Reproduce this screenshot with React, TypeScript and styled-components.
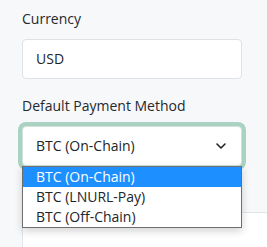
import React, { useState } from "react";
import styled, { createGlobalStyle } from "styled-components";

const options = ["BTC (On-Chain)", "BTC (LNURL-Pay)", "BTC (Off-Chain)"];

export default function App() {
	const [selected] = useState(options[0]);

	return (
		<>
			<GlobalStyle />
			<Page>
				<Label>Currency</Label>
				<Input>USD</Input>

				<Label $gap={17}>Default Payment Method</Label>
				<SelectWrap>
					<Select>
						<span>{selected}</span>
						<svg width="10" height="6" viewBox="0 0 10 6" fill="none">
							<path
								d="M1 1l4 4 4-4"
								stroke="#1f2429"
								strokeWidth="1.6"
								strokeLinecap="round"
								strokeLinejoin="round"
							/>
						</svg>
					</Select>
					<Dropdown>
						{options.map((opt) => (
							<Option key={opt} $active={opt === selected}>
								{opt}
							</Option>
						))}
					</Dropdown>
				</SelectWrap>

				{/* next card, cut off by the frame */}
				<Card />
			</Page>
		</>
	);
}

const GlobalStyle = createGlobalStyle`
	html, body {
		margin: 0;
		padding: 0;
		background: #f7f8fa;
		overflow: hidden;
	}
	* {
		box-sizing: border-box;
	}
`;

const Page = styled.div`
	display: flex;
	flex-direction: column;
	padding: 9px 25px 0 22px;
	font-family: "Open Sans", sans-serif;
	font-size: 14px;
	line-height: 20px;
	color: #212529;
`;

const Label = styled.div<{ $gap?: number }>`
	margin-top: ${(p) => p.$gap ?? 0}px;
	margin-bottom: 10px;
	color: #24292e;
`;

const Input = styled.div`
	height: 40px;
	display: flex;
	align-items: center;
	padding: 0 13px;
	background: #fff;
	border: 1px solid #dee2e6;
	border-radius: 4px;
`;

const SelectWrap = styled.div`
	position: relative;
`;

const Select = styled.div`
	height: 40px;
	display: flex;
	align-items: center;
	justify-content: space-between;
	padding: 0 15px 0 13px;
	background: #fff;
	border: 1px solid #cfe3da;
	border-radius: 4px;
	box-shadow: 0 0 0 4px #a9d2c2;
`;

const Dropdown = styled.div`
	position: absolute;
	top: 40px;
	left: 0;
	right: 0;
	z-index: 10;
	background: #fff;
	border: 1px solid #6f6f6f;
	box-shadow: 0 3px 8px rgba(0, 0, 0, 0.18);
`;

const Option = styled.div<{ $active: boolean }>`
	height: 20px;
	padding: 0 13px;
	line-height: 20px;
	background: ${(p) => (p.$active ? "#1e8fff" : "#fff")};
	color: ${(p) => (p.$active ? "#fff" : "#212529")};
`;

const Card = styled.div`
	margin-top: 46px;
	margin-right: -25px;
	height: 35px;
	background: #fff;
	border-top: 1px solid #e1e4e8;
	border-left: 1px solid #e1e4e8;
	border-top-left-radius: 4px;
`;
